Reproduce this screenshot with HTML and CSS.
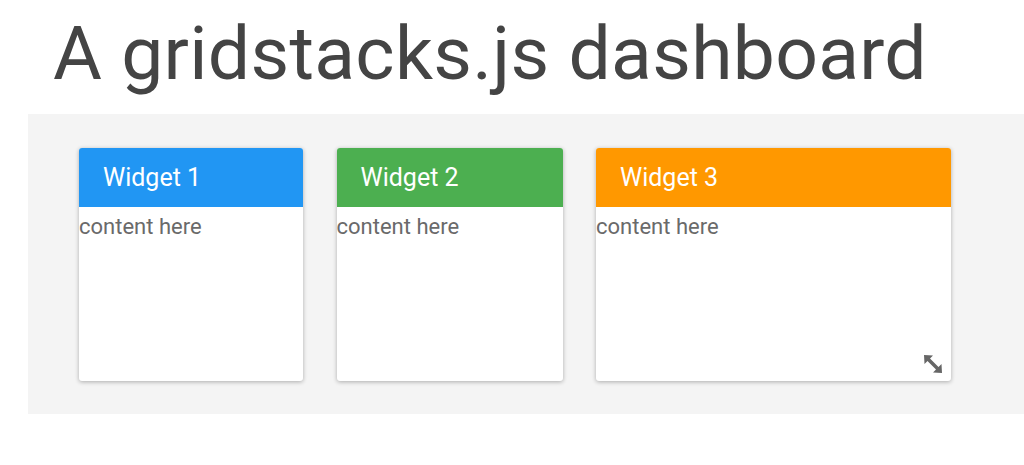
FILE: index.html
```html
<!DOCTYPE html>
<html>
<head>
<meta charset="utf-8">
<link rel="stylesheet" href="styles.css">
</head>
<body>
<h1 class="title">A gridstacks.js dashboard</h1>
<div class="grid">
  <div class="widget">
    <div class="widget-head blue">Widget 1</div>
    <div class="widget-body">content here</div>
  </div>
  <div class="widget">
    <div class="widget-head green">Widget 2</div>
    <div class="widget-body">content here</div>
  </div>
  <div class="widget">
    <div class="widget-head orange">Widget 3</div>
    <div class="widget-body">content here</div>
    <svg class="resize" width="24" height="24" viewBox="0 0 24 24">
      <path d="M2 2 L11 2.5 L8 5.5 L16.5 14 L19.5 11 L20 20 L11 19.5 L14 16.5 L5.5 8 L2.5 11 Z" fill="#666"/>
    </svg>
  </div>
</div>
</body>
</html>
```
FILE: styles.css
```css
html, body {
  margin: 0;
  padding: 0;
  background: #fff;
  font-family: Roboto, "Noto Sans", sans-serif;
}
.title {
  margin: 0;
  padding: 11px 0 0 53px;
  height: 114px;
  box-sizing: border-box;
  font-size: 75px;
  font-weight: 400;
  line-height: 84px;
  color: #444;
  letter-spacing: 0.3px;
}
.grid {
  margin-left: 28px;
  background: #f4f4f4;
  padding: 34px 0 33px 51px;
  display: grid;
  grid-template-columns: 224px 226px 355px;
  column-gap: 33.5px;
}
.widget {
  position: relative;
  height: 233px;
  background: #fff;
  border-radius: 3px;
  overflow: hidden;
  box-shadow: 0 1px 4px rgba(0,0,0,0.3);
}
.widget-head {
  height: 59px;
  line-height: 59px;
  padding-left: 24px;
  color: #fff;
  font-size: 25px;
}
.blue { background: #2196f3; }
.green { background: #4caf50; }
.orange { background: #ff9800; }
.widget-body {
  font-size: 22px;
  color: #6a6a6a;
  line-height: 26px;
  padding-top: 7px;
}
.resize {
  position: absolute;
  right: 5px;
  bottom: 4px;
}
```
